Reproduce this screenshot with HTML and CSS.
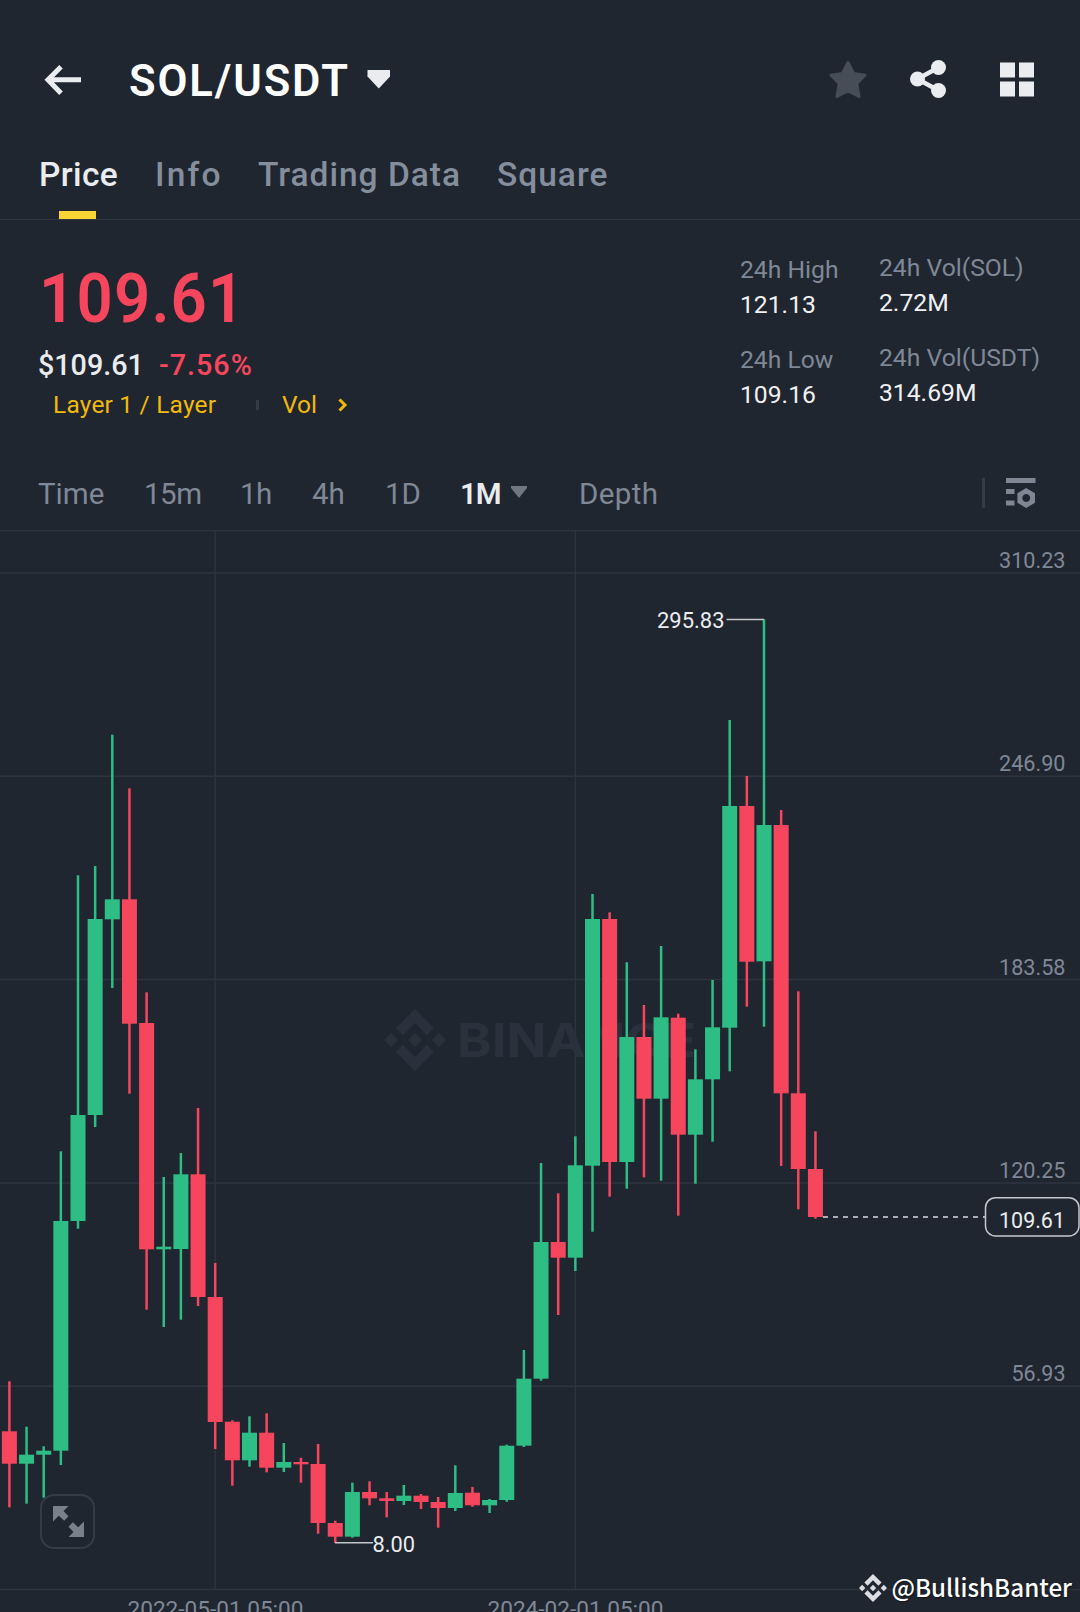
FILE: index.html
```html
<!DOCTYPE html>
<html lang="en">
<head>
<meta charset="utf-8">
<title>SOL/USDT</title>
<link rel="stylesheet" href="styles.css">
</head>
<body>
<header class="topbar">
  <svg class="back" width="38" height="30" viewBox="0 0 38 30"><path d="M37 14.7H4M17 1.800L4 14.700L17 28.200" fill="none" stroke="#eaecef" stroke-width="5"/></svg>
  <h1 class="pair">SOL/USDT</h1>
  <svg class="pair-caret" width="24" height="19" viewBox="0 0 24 19"><path d="M.5 0H23v6.500L11.800 18.500L.5 6.500z" fill="#eaecef"/></svg>
  <nav class="actions">
    <svg width="38" height="40" viewBox="0 0 38 40"><path d="M19 2.500L24.500 13.500L36 15.200L27.800 23.500L30 36.500L19 31L8 36.500L10.200 23.500L2 15.200L13.500 13.500z" fill="#474d57" stroke="#474d57" stroke-width="3" stroke-linejoin="round"/></svg>
    <svg class="share" width="38" height="40" viewBox="0 0 38 40"><g fill="#eaecef"><circle cx="29.500" cy="8.500" r="7.500"/><circle cx="8.500" cy="20" r="7.500"/><circle cx="29.500" cy="31.500" r="7.500"/></g><path d="M29.500 8.500L8.500 20L29.500 31.500" fill="none" stroke="#eaecef" stroke-width="4.500"/></svg>
    <svg width="34" height="36" viewBox="0 0 34 36"><path d="M0 .5h15v15H0zM19 .5h15v15H19zM0 19.500h15v15H0zM19 19.500h15v15H19z" fill="#eaecef"/></svg>
  </nav>
</header>

<nav class="tabs">
  <a class="tab active">Price</a>
  <a class="tab info">Info</a>
  <a class="tab">Trading Data</a>
  <a class="tab">Square</a>
</nav>

<section class="ticker">
  <div class="quote">
    <div class="last">109.61</div>
    <div class="fiat"><span class="usd">$109.61</span><span class="change">-7.56%</span></div>
    <div class="tags">
      <span class="tag-layer">Layer 1 / Layer</span><i class="tag-sep"></i><span class="tag-vol">Vol</span>
      <svg width="10" height="14" viewBox="0 0 10 14"><path d="M1.500 1.500L7 7L1.500 12.500" fill="none" stroke="#f0b90b" stroke-width="3"/></svg>
    </div>
  </div>
  <dl class="stats">
    <dt>24h High</dt><dd>121.13</dd>
    <dt>24h Low</dt><dd>109.16</dd>
  </dl>
  <dl class="stats volume">
    <dt>24h Vol(SOL)</dt><dd>2.72M</dd>
    <dt>24h Vol(USDT)</dt><dd>314.69M</dd>
  </dl>
</section>

<nav class="intervals">
  <span>Time</span>
  <span class="tight">15m</span>
  <span class="tight">1h</span>
  <span>4h</span>
  <span>1D</span>
  <span class="current">1M<svg width="16" height="12" viewBox="0 0 16 12"><path d="M0 0H16V2L8 12L0 2z" fill="#6f7782"/></svg></span>
  <span class="depth">Depth</span>
  <i class="tool-sep"></i>
  <svg class="settings" width="30" height="30" viewBox="0 0 30 30"><path d="M0 0h29.500v5H0zM0 11h8.500v5H0zM0 22.500h8.500v5H0z" fill="#7f8794"/><path d="M20.200 10L29 15.200V24.800L20.200 30L11.400 24.800V15.200zM20.200 16a4 4 0 1 0 .01 0z" fill="#7f8794" fill-rule="evenodd"/></svg>
</nav>

<main class="chart">
  <svg class="plot" width="1080" height="1082" viewBox="0 530 1080 1082">
    <g class="grid">
      <path d="M0 530.5H1080M0 573H1080M0 776.3H1080M0 979.6H1080M0 1182.9H1080M0 1386.2H1080M0 1589.5H1080"/>
      <path d="M215.200 530V1589.500M575.400 530V1589.500"/>
    </g>
    <g class="watermark">
      <path transform="translate(384 1009) scale(2.583)" d="M16.624 13.9202l2.7175 2.7154-7.353 7.353-7.353-7.352 2.7175-2.7164 4.6355 4.6595 4.6356-4.6595zm4.6366-4.6366L24 12l-2.7154 2.7164L18.5682 12l2.6924-2.7164zm-9.272.001l2.7163 2.6914-2.7164 2.7174v-.001L9.2721 12l2.7164-2.7154zm-9.2722-.001L5.4088 12l-2.6914 2.6924L0 12l2.7164-2.7164zM11.9885.0115l7.353 7.329-2.7174 2.7154-4.6356-4.6356-4.6355 4.6595-2.7174-2.7154 7.353-7.353z"/>
      <text x="457" y="1057" textLength="239" lengthAdjust="spacingAndGlyphs">BINANCE</text>
    </g>
    <g id="candles"></g>
    <g class="marks">
      <path d="M726.500 619.500H764M335 1542.700H373"/>
      <path class="dash" d="M823 1217H985"/>
      <rect x="985.500" y="1197.700" width="93.500" height="38.300" rx="10"/>
    </g>
    <g class="axis">
      <text x="999" y="568" textLength="66.500" lengthAdjust="spacingAndGlyphs">310.23</text>
      <text x="999" y="771" textLength="66.500" lengthAdjust="spacingAndGlyphs">246.90</text>
      <text x="999" y="975" textLength="66.500" lengthAdjust="spacingAndGlyphs">183.58</text>
      <text x="999" y="1178" textLength="66.500" lengthAdjust="spacingAndGlyphs">120.25</text>
      <text x="1011.500" y="1381" textLength="54" lengthAdjust="spacingAndGlyphs">56.93</text>
      <text x="127.500" y="1617" textLength="176" lengthAdjust="spacingAndGlyphs">2022-05-01 05:00</text>
      <text x="487.500" y="1617" textLength="176" lengthAdjust="spacingAndGlyphs">2024-02-01 05:00</text>
    </g>
    <g class="values">
      <text x="999" y="1228" textLength="66" lengthAdjust="spacingAndGlyphs">109.61</text>
      <text x="657" y="628" textLength="67.500" lengthAdjust="spacingAndGlyphs">295.83</text>
      <text x="372.500" y="1552" textLength="42.500" lengthAdjust="spacingAndGlyphs">8.00</text>
    </g>
  </svg>
  <button class="expand" aria-label="Expand">
    <svg width="31" height="31" viewBox="0 0 31 31" fill="#78808b"><path d="M0 0H15.500L10.500 5L15.500 10.200L11.200 14.800L5.800 9.800L0 15.500zM31 31H15.500L20.500 26L15.500 20.800L19.800 16.200L25.200 21.200L31 15.500z"/></svg>
  </button>
  <div class="author">
    <svg width="28" height="28" viewBox="0 0 24 24" fill="#dcdde0"><path d="M16.624 13.9202l2.7175 2.7154-7.353 7.353-7.353-7.352 2.7175-2.7164 4.6355 4.6595 4.6356-4.6595zm4.6366-4.6366L24 12l-2.7154 2.7164L18.5682 12l2.6924-2.7164zm-9.272.001l2.7163 2.6914-2.7164 2.7174v-.001L9.2721 12l2.7164-2.7154zm-9.2722-.001L5.4088 12l-2.6914 2.6924L0 12l2.7164-2.7164zM11.9885.0115l7.353 7.329-2.7174 2.7154-4.6356-4.6356-4.6355 4.6595-2.7174-2.7154 7.353-7.353z"/></svg>
    <span>@BullishBanter</span>
  </div>
</main>
<script src="chart.js"></script>
</body>
</html>
```
FILE: styles.css
```css
* { box-sizing: border-box; }

body {
  margin: 0;
  width: 1080px;
  height: 1612px;
  overflow: hidden;
  background: #202630;
  color: #eaecef;
  font-family: Roboto, "Liberation Sans", sans-serif;
}

svg { display: block; flex: none; }

/* Top bar */
.topbar {
  display: flex;
  align-items: center;
  height: 154px;
  padding: 5px 46px 0 44px;
}
.pair {
  margin: 5px 0 0 47px;
  width: 238px;
  font-size: 43.5px;
  line-height: 50px;
  font-weight: 600;
  letter-spacing: 1.9px;
  color: #fff;
}
.pair-caret { margin-top: -1px; }
.actions {
  display: flex;
  align-items: center;
  margin-left: auto;
}
.actions svg + svg { margin-left: 42px; }
.actions svg:last-child { margin-left: 53px; }
.actions .share { margin-top: -1px; }

/* Tabs */
.tabs {
  display: grid;
  grid-template-columns: 116px 103px 239px auto;
  height: 66px;
  padding-left: 39px;
  border-bottom: 1px solid #2f3641;
}
.tab {
  font-size: 33.5px;
  line-height: 41px;
  font-weight: 500;
  letter-spacing: 1px;
  color: #848e9c;
  white-space: nowrap;
}
.tab.info { letter-spacing: 2.2px; }
.tab.active { letter-spacing: .4px; color: #eaecef; }
.tab.active::after {
  content: "";
  display: block;
  width: 37px;
  height: 8px;
  margin: 16px 0 0 20px;
  background: #fcd535;
}

/* Ticker */
.ticker {
  display: flex;
  height: 238px;
  padding: 32px 0 0 39px;
}
.quote { width: 701px; padding-top: 12px; }
.last {
  font-size: 69px;
  line-height: 70px;
  font-weight: 600;
  letter-spacing: 1.300px;
  color: #f6465d;
  transform: scaleX(.92);
  transform-origin: 0 0;
}
.fiat {
  display: flex;
  margin-top: 11px;
  font-size: 28.7px;
  line-height: 40px;
  font-weight: 500;
}
.usd { width: 120px; margin-left: -1px; }
.change { margin-left: 1px; letter-spacing: 1px; color: #f6465d; }
.tags {
  display: flex;
  align-items: center;
  margin-top: 3px;
  padding-left: 14px;
  font-size: 24.5px;
  line-height: 34px;
  color: #f0b90b;
}
.tag-layer { width: 203px; letter-spacing: .2px; }
.tag-sep { width: 3px; height: 10px; background: #333b47; }
.tag-vol { width: 56px; margin-left: 23px; }

.stats {
  width: 139px;
  margin: 0;
  font-size: 24.7px;
  white-space: nowrap;
}
.stats dt { line-height: 36px; color: #7f8896; }
.stats dd { margin: 0 0 20px; line-height: 34px; color: #f0f1f3; }
.stats.volume { width: 190px; margin-top: -2px; }

/* Interval bar */
.intervals {
  display: grid;
  grid-template-columns: 106px 96px 72px 73px 75px 119px 403px 24px auto;
  align-items: center;
  height: 72px;
  padding-left: 38px;
  font-size: 29.5px;
  line-height: 40px;
  color: #7f8896;
}
.intervals .tight { letter-spacing: -.5px; }
.intervals .depth { letter-spacing: .4px; }
.intervals .current {
  display: flex;
  align-items: center;
  gap: 11px;
  font-weight: 600;
  letter-spacing: -1.200px;
  color: #eaecef;
}
.current svg { margin-top: -4px; }
.tool-sep, .settings { margin-top: -3px; }
.tool-sep { width: 3px; height: 30px; background: #333b47; }

/* Chart */
.chart { position: relative; height: 1082px; }
.plot { font-family: Roboto, "Liberation Sans", sans-serif; font-size: 22.5px; }
.grid { stroke: #2d343f; stroke-width: 1.5; }
.watermark { fill: #2b313c; }
.watermark text { font: 700 47px Inter, sans-serif; }
.up { fill: #2ebd85; }
.down { fill: #f6465d; }
.marks { fill: none; stroke: #c3c6cb; stroke-width: 1.5; }
.marks .dash { stroke: #a9aeb6; stroke-width: 2; stroke-dasharray: 5 5; }
.axis { fill: #7f8896; }
.values { fill: #eaecef; }

.expand {
  position: absolute;
  left: 40px;
  top: 964px;
  width: 55px;
  height: 55px;
  padding: 0 0 0 11px;
  border: 2px solid #343c48;
  border-radius: 14px;
  background: #202630;
}
.author {
  position: absolute;
  right: 8px;
  bottom: 7px;
  display: flex;
  align-items: center;
  gap: 4px;
  height: 36px;
  font: 500 24.2px/34px "Noto Sans CJK SC", "Noto Sans", sans-serif;
  color: #fff;
  text-shadow: 1px 1px 2px #0008;
}
.author svg { margin-top: 1px; }
```
FILE: chart.js
```js
// One row per month: direction, high, body top, body bottom, low (plot units)
const rows = [
  ['down', 1381.3, 1431.3, 1463.7, 1507.3],
  ['up', 1426.7, 1454.7, 1463.7, 1503.7],
  ['up', 1446.3, 1450.7, 1454.7, 1497.7],
  ['up', 1151.3, 1221, 1450.7, 1465],
  ['up', 875.3, 1115, 1221, 1228.7],
  ['up', 866, 919, 1115, 1127],
  ['up', 734.7, 899.3, 919.3, 988],
  ['down', 788.3, 899.3, 1023.7, 1093.7],
  ['down', 992.3, 1023, 1249.3, 1309.7],
  ['up', 1177, 1246.7, 1249.3, 1327],
  ['up', 1153, 1174.3, 1249, 1319.7],
  ['down', 1108, 1174.3, 1297, 1306],
  ['down', 1263, 1297, 1422, 1449],
  ['down', 1420.3, 1421.7, 1460.3, 1485.7],
  ['up', 1416.3, 1432.7, 1460.3, 1466.7],
  ['down', 1413.3, 1432.7, 1467.7, 1472.3],
  ['up', 1443, 1462, 1467.7, 1472],
  ['down', 1457.7, 1462, 1464.3, 1482.7],
  ['down', 1444, 1464, 1523, 1533.7],
  ['down', 1520.7, 1523, 1536.7, 1543],
  ['up', 1482.7, 1492, 1536.7, 1537.7],
  ['down', 1481.3, 1492, 1498.3, 1505.3],
  ['down', 1492, 1498.3, 1501, 1517.3],
  ['up', 1485, 1495.7, 1501, 1505],
  ['down', 1494, 1495.7, 1502, 1509],
  ['down', 1497, 1502, 1508, 1527.7],
  ['up', 1465.3, 1493, 1508, 1511],
  ['down', 1487, 1492.7, 1505.3, 1506.7],
  ['up', 1499, 1500, 1505.3, 1513],
  ['up', 1444.7, 1445.7, 1500, 1501.7],
  ['up', 1350, 1378.7, 1445.7, 1447],
  ['up', 1163, 1242, 1378.7, 1380.7],
  ['down', 1193.3, 1242, 1257.7, 1315],
  ['up', 1136.3, 1165.3, 1257.7, 1271],
  ['up', 894, 919, 1165.7, 1231.7],
  ['down', 912.3, 919, 1162, 1196.7],
  ['up', 962.3, 1037, 1162, 1188.7],
  ['down', 1005, 1037, 1098.7, 1177.3],
  ['up', 946, 1017.3, 1098.7, 1180.7],
  ['down', 1013.7, 1017.7, 1134.7, 1215.7],
  ['up', 1049.3, 1079.3, 1134.7, 1183.7],
  ['up', 980, 1027.3, 1079.3, 1141.7],
  ['up', 720, 806, 1027.7, 1071.3],
  ['down', 776, 806, 961.7, 1006.7],
  ['up', 619.3, 825, 961.3, 1026.7],
  ['down', 810, 825, 1093.3, 1166],
  ['down', 991.3, 1093.3, 1169, 1209.3],
  ['down', 1131.3, 1169, 1217, 1218.7]
];
const FIRST = 9.4, STEP = 17.15, BODY = 15, WICK = 2.5;
const layer = document.getElementById('candles');
function bar(cls, x, y, w, h) {
  const r = document.createElementNS('http://www.w3.org/2000/svg', 'rect');
  r.setAttribute('class', cls);
  r.setAttribute('x', x);
  r.setAttribute('y', y);
  r.setAttribute('width', w);
  r.setAttribute('height', h);
  layer.appendChild(r);
}
rows.forEach(([cls, high, top, bottom, low], i) => {
  const x = FIRST + i * STEP;
  bar(cls, x - WICK / 2, high, WICK, low - high);
  bar(cls, x - BODY / 2, top, BODY, bottom - top);
});
```
